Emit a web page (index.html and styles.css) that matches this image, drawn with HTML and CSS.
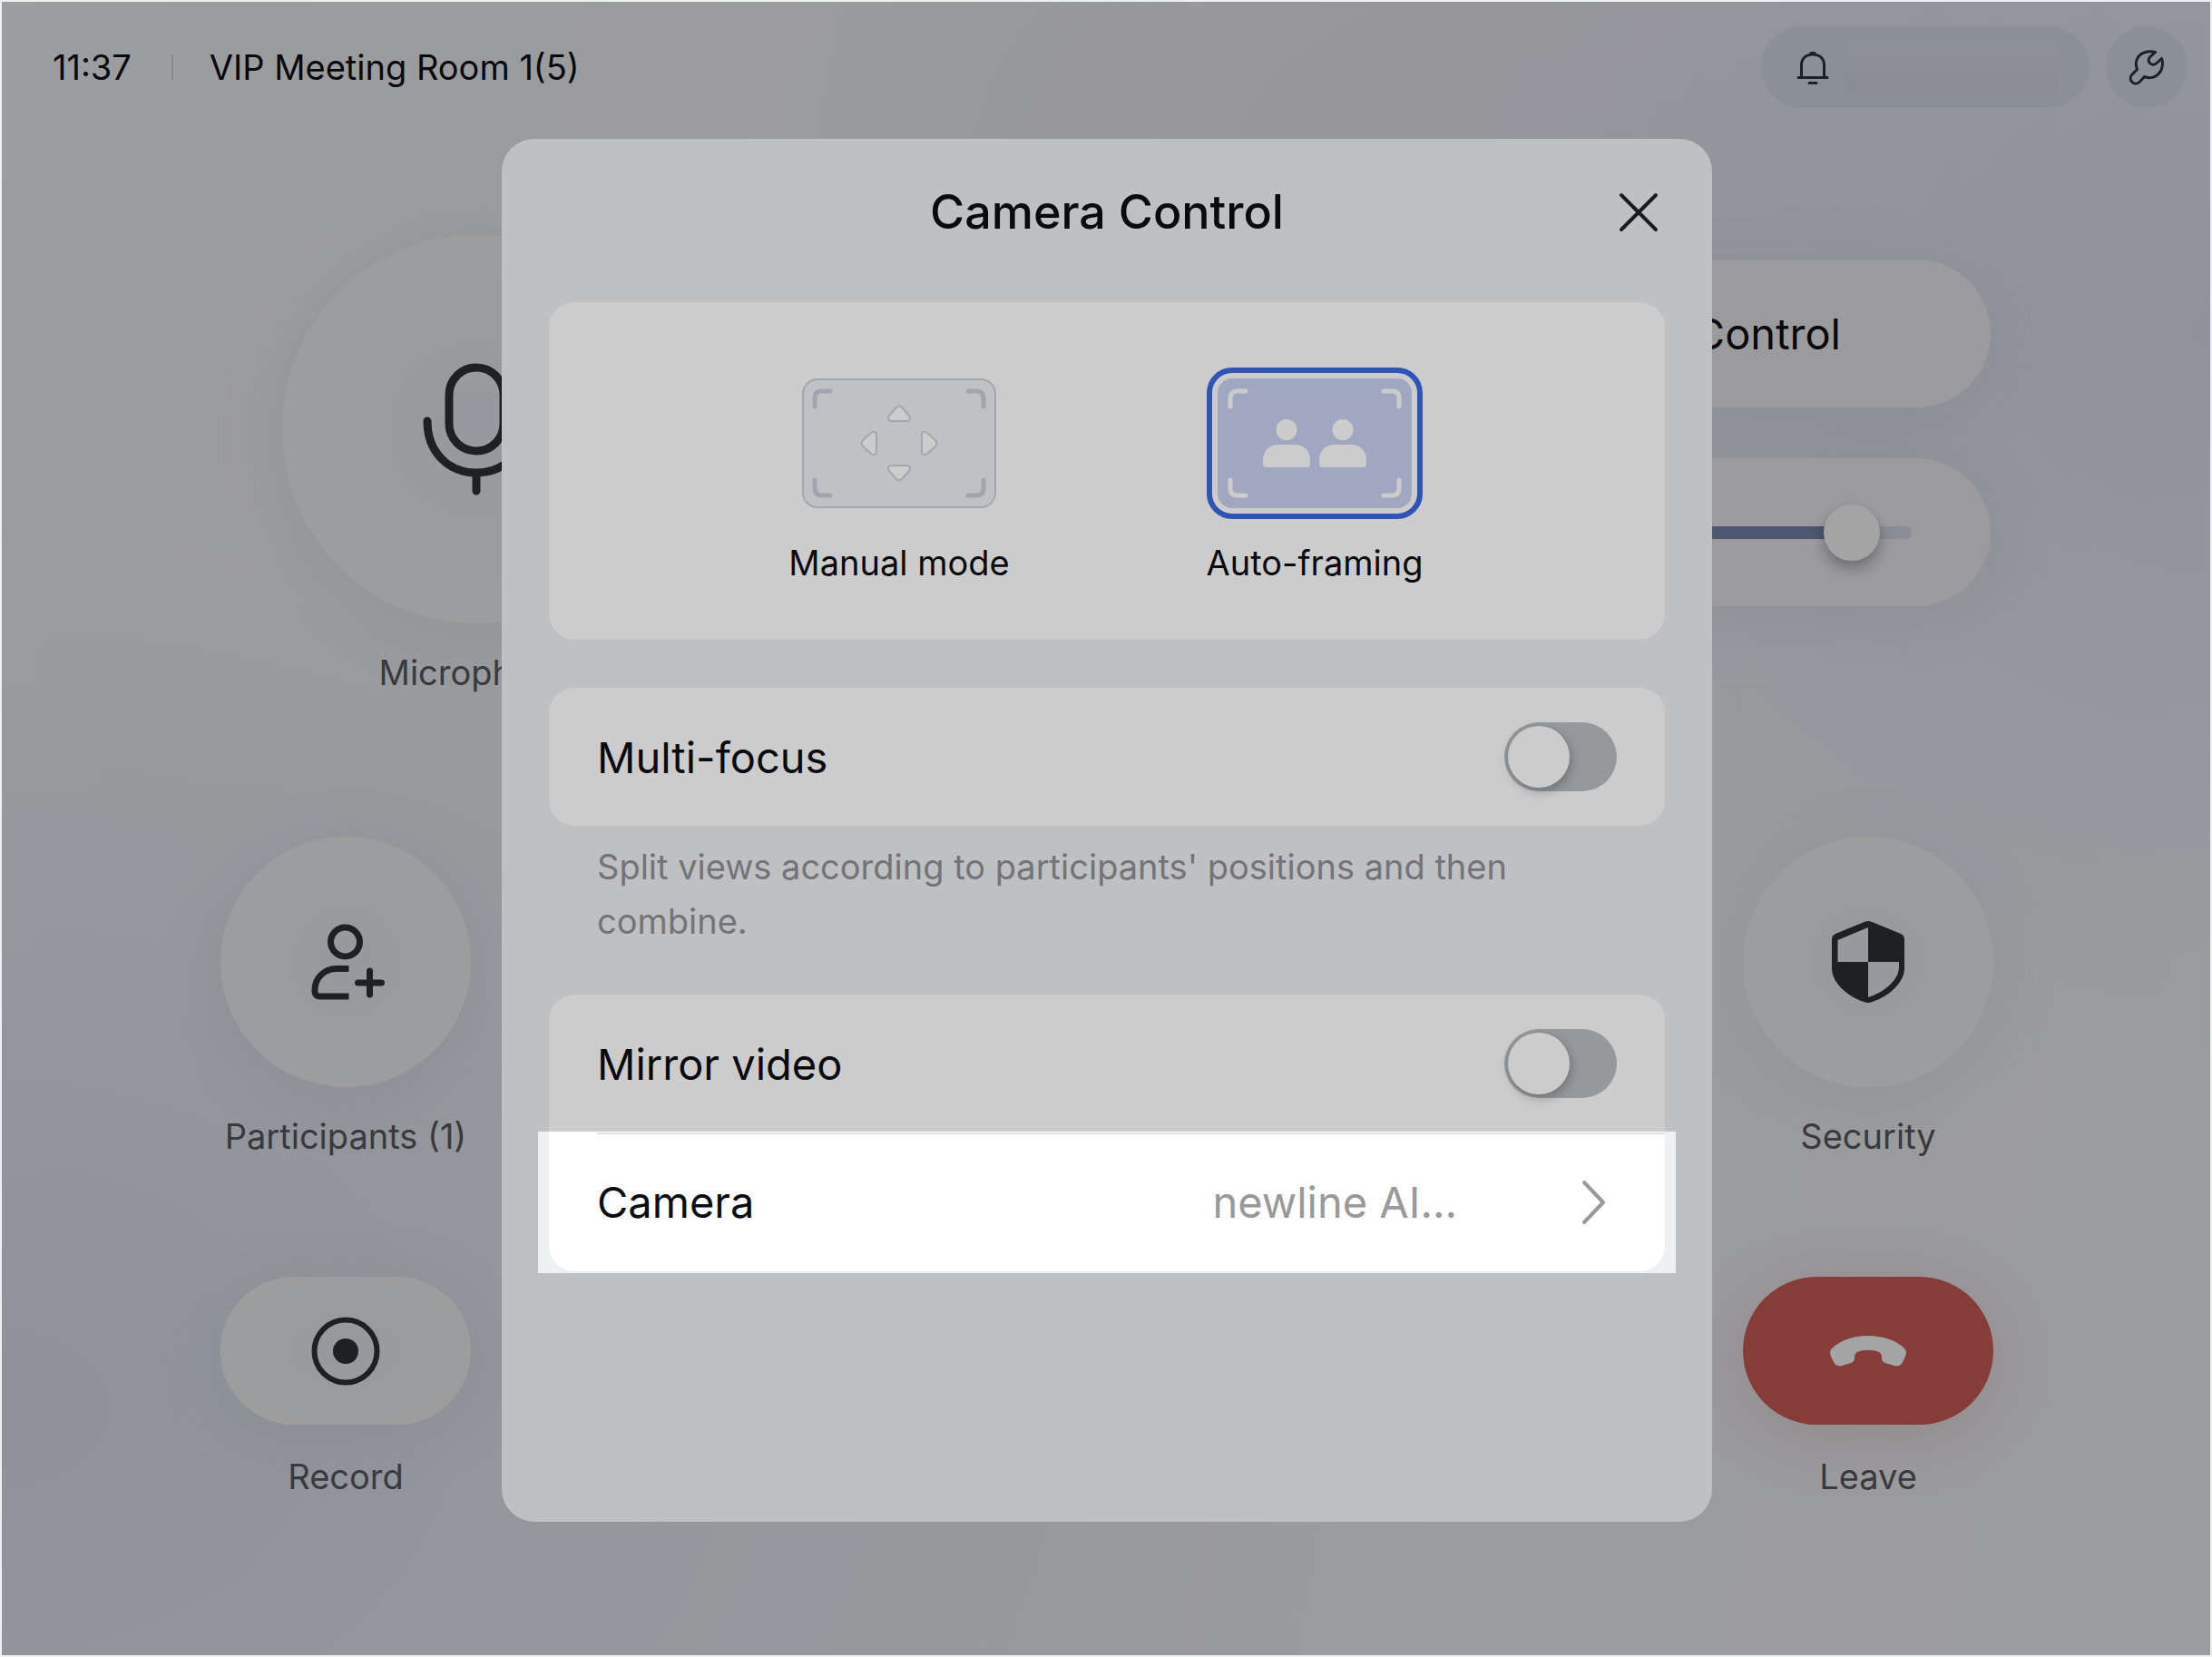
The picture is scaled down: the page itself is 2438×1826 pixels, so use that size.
FILE: index.html
```html
<!DOCTYPE html>
<html lang="en">
<head>
  <meta charset="UTF-8" />
  <meta name="viewport" content="width=device-width, initial-scale=1" />
  <title>Camera Control</title>
  <link rel="stylesheet" href="styles.css">
</head>
<body>
  <div class="room">
    <header class="topbar">
      <time class="clock">11:37</time>
      <span class="divider"></span>
      <span class="room-name">VIP Meeting Room 1(5)</span>
      <button class="top-btn notice" aria-label="Notifications">
        <svg class="top-icon" viewBox="0 0 40 40" fill="none" stroke="currentColor" stroke-width="3" stroke-linecap="round">
          <path d="M4 31.500H36M7.500 31V17.500C7.500 10.500 12.500 6 20 6S32.500 10.500 32.500 17.500V31" />
          <path d="M18 4.500H22M16 37.500H24" />
        </svg>
        <span class="notice-text"></span>
      </button>
      <button class="top-btn" aria-label="Settings">
        <svg class="top-icon" viewBox="0 0 40 40" fill="none" stroke="currentColor" stroke-width="3" stroke-linejoin="round">
          <path d="M29.500 3.500C19 .5 10 6 8.500 14C8 17.500 8.500 20 9.500 22.500L4 28C1.500 30.500 1.500 34 4 36.500S10 38.500 12.500 36L17.500 30.500C23 32.500 29 31.500 33 27.500C37.500 23 38.500 16 36.500 10.500L31 15.500C28.500 18 25.500 17.500 23.500 15.500C21.500 13.500 21.500 10.500 24 8.500Z" />
        </svg>
      </button>
    </header>

    <main class="panel">
      <div class="row row-top">
        <div class="action action-big">
          <button class="bubble" aria-labelledby="lbl-mic">
            <svg class="icon-mic" viewBox="0 0 118 146" fill="none" stroke="currentColor" stroke-width="9" stroke-linecap="round">
              <rect x="29" y="5" width="60" height="92" rx="30" />
              <path d="M5 64C5 98 28 121 59 121S113 98 113 64M59 121V141" />
            </svg>
          </button>
          <span class="label" id="lbl-mic">Microphone</span>
        </div>
        <div class="side">
          <button class="pill">Camera Control</button>
          <div class="pill">
            <input class="volume" type="range" min="0" max="100" value="93" aria-label="Volume" />
          </div>
        </div>
      </div>

      <div class="row">
        <div class="action">
          <button class="bubble" aria-labelledby="lbl-people">
            <svg class="icon-people" viewBox="-6 0 88 84" fill="none" stroke="currentColor" stroke-width="7">
              <circle cx="37.500" cy="20" r="16" />
              <path d="M41.500 49.500H28C14 49.500 4 60 4 73V75C4 78 6 80 9 80H41.500" />
              <path d="M51.500 65H77.500M64.500 52V78" stroke-linecap="round" />
            </svg>
          </button>
          <span class="label" id="lbl-people">Participants (1)</span>
        </div>
        <div class="action">
          <button class="bubble" aria-labelledby="lbl-security">
            <svg class="icon-shield" viewBox="0 0 82 90">
              <path fill="currentColor" fill-rule="evenodd" d="M38 .5Q41-.5 44 .5L77 14Q81 16 81 20V52C81 70 60 85 44 89.500Q41 90.500 38 89.500C22 85 1 70 1 52V20Q1 16 5 14ZM41 7L7.500 21V45H41V84C58 79 75 65 75 51V45H41Z" />
            </svg>
          </button>
          <span class="label" id="lbl-security">Security</span>
        </div>
      </div>

      <div class="row">
        <div class="action action-flat">
          <button class="bubble" aria-labelledby="lbl-record">
            <svg class="icon-record" viewBox="0 0 76 76">
              <circle cx="38" cy="38" r="34.500" fill="none" stroke="currentColor" stroke-width="6" />
              <circle cx="38" cy="38" r="14" fill="currentColor" />
            </svg>
          </button>
          <span class="label" id="lbl-record">Record</span>
        </div>
        <div class="action action-flat">
          <button class="bubble bubble-leave" aria-labelledby="lbl-leave">
            <svg class="icon-leave" viewBox="0 0 84 34">
              <path fill="currentColor" d="M42 0C58 0 73 5 82 14C85 17 84 21 82 25L80 29C78 33 75 34 71 33L61 30C58 29 57 27 57 24C57 21 56 19 54 18C48 15 36 15 30 18C28 19 27 21 27 24C27 27 26 29 23 30L13 33C9 34 6 33 4 29L2 25C0 21-1 17 2 14C11 5 26 0 42 0Z" />
            </svg>
          </button>
          <span class="label" id="lbl-leave">Leave</span>
        </div>
      </div>
    </main>
  </div>

  <div class="backdrop">
    <section class="dialog" role="dialog" aria-labelledby="dialog-title">
      <div class="dialog-head">
        <h1 class="dialog-title" id="dialog-title">Camera Control</h1>
        <button class="close" aria-label="Close">
          <svg class="icon-close" viewBox="0 0 44 44" fill="none" stroke="currentColor" stroke-width="4" stroke-linecap="round">
            <path d="M3 3L41 41M41 3L3 41" />
          </svg>
        </button>
      </div>

      <div class="card modes">
        <label class="mode">
          <input class="mode-input" type="radio" name="mode" value="manual" />
          <span class="mode-frame">
            <svg class="thumb" viewBox="0 0 214 143" fill="none">
              <rect x="1" y="1" width="212" height="141" rx="16" fill="#f0f2f6" stroke="#cdd1de" stroke-width="2" />
              <path stroke="#cbcedb" stroke-width="5" stroke-linecap="round" d="M14 31V22Q14 14 22 14H31M183 14H192Q200 14 200 22V31M200 112V121Q200 129 192 129H183M31 129H22Q14 129 14 121V112" />
              <g fill="#fff" stroke="#cdd1de" stroke-width="2" stroke-linejoin="round">
                <path d="M104 32Q107 29 110 32L118 41Q121 46 116 47H98Q93 46 96 41Z" />
                <path d="M104 111Q107 114 110 111L118 102Q121 97 116 96H98Q93 97 96 102Z" />
                <path d="M67 75Q64 71.500 67 68L76 60Q81 57 82 62V81Q81 86 76 83Z" />
                <path d="M147 75Q150 71.500 147 68L138 60Q133 57 132 62V81Q133 86 138 83Z" />
              </g>
            </svg>
          </span>
          <span class="mode-name">Manual mode</span>
        </label>
        <label class="mode">
          <input class="mode-input" type="radio" name="mode" value="auto" checked />
          <span class="mode-frame">
            <svg class="thumb" viewBox="0 0 214 143" fill="none">
              <rect width="214" height="143" rx="16" fill="#c9d3f2" />
              <path stroke="#fff" stroke-width="5" stroke-linecap="round" d="M14 31V22Q14 14 22 14H31M183 14H192Q200 14 200 22V31M200 112V121Q200 129 192 129H183M31 129H22Q14 129 14 121V112" />
              <g fill="#fff">
                <circle cx="76" cy="56.500" r="11.500" />
                <path d="M50 91C50 79 57 73 67 73H85C95 73 102 79 102 91V94Q102 98 98 98H54Q50 98 50 94Z" />
                <circle cx="138" cy="56.500" r="11.500" />
                <path d="M112 91C112 79 119 73 129 73H147C157 73 164 79 164 91V94Q164 98 160 98H116Q112 98 112 94Z" />
              </g>
            </svg>
          </span>
          <span class="mode-name">Auto-framing</span>
        </label>
      </div>

      <div class="card">
        <div class="setting">
          <label for="multi-focus">Multi-focus</label>
          <input class="switch" type="checkbox" id="multi-focus" />
        </div>
      </div>
      <p class="hint">Split views according to participants' positions and then combine.</p>

      <div class="card">
        <div class="setting">
          <label for="mirror">Mirror video</label>
          <input class="switch" type="checkbox" id="mirror" />
        </div>
        <button class="setting setting-link spotlight">
          <span>Camera</span>
          <span class="setting-value">newline AI...</span>
          <svg class="icon-chevron" viewBox="0 0 64 64" fill="none" stroke="currentColor" stroke-width="4" stroke-linecap="round" stroke-linejoin="round">
            <path d="M28 10L49 32L28 54" />
          </svg>
        </button>
      </div>
    </section>
  </div>
</body>
</html>
```
FILE: styles.css
```css
:root {
  --ink:      #0b0d12;
  --icon:     #303338;
  --muted:    #575b62;
  --surface:  #f4f5f6;
  --surface2: #e9edf4;
  --blue:     #3d68e6;
  --red:      #d15e59;
}

* { box-sizing: border-box; }

body {
  margin: 0;
  min-height: 100vh;
  overflow: hidden;
  font-family: Inter, "Liberation Sans", sans-serif;
  color: var(--ink);
}

/* light line round the whole screen */
body::after {
  content: "";
  position: fixed;
  inset: 0;
  border: 2px solid #eff1f1;
  pointer-events: none;
}

button {
  padding: 0;
  border: 0;
  background: none;
  color: inherit;
  font: inherit;
  cursor: pointer;
}

svg { display: block; }

.room {
  min-height: 100vh;
  background:
    radial-gradient(ellipse 35% 45% at 100% 20%, #dfe4f3, transparent),
    radial-gradient(ellipse 55% 55% at 0% 85%, #dde3f0, transparent),
    radial-gradient(ellipse 40% 30% at 72% 10%, #e9e8f1, transparent),
    linear-gradient(100deg, #f3f4f6, #eff0f4 55%, #f2f3f6);
}

.topbar {
  display: flex;
  align-items: center;
  padding: 29px 27px 0 58px;
  font-size: 38px;
}
.divider {
  width: 2px;
  height: 28px;
  margin: 0 40px 0 44px;
  background: #d3d4e0;
}
.top-btn {
  display: flex;
  align-items: center;
  justify-content: center;
  width: 90px;
  height: 90px;
  border-radius: 45px;
  background: #d9dee9;
  color: var(--icon);
}
.notice {
  gap: 16px;
  width: 362px;
  margin: 0 18px 0 auto;
}
.top-icon { width: 40px; height: 40px; }
.notice-text {
  width: 233px;
  height: 56px;
  background: linear-gradient(#e0e2ea, #d7dae5);
}

.panel {
  display: flex;
  flex-direction: column;
  gap: 131px;
  padding: 140px 241px 0 243px;
}
.row { display: flex; justify-content: space-between; }
.row-top { padding: 0 3px 26px 68px; }

.action {
  display: flex;
  flex-direction: column;
  align-items: center;
  flex-shrink: 0;
  gap: 30px;
  width: 276px;
}
.action-big { width: 428px; }
.action-flat { gap: 33px; }
.bubble {
  display: flex;
  align-items: center;
  justify-content: center;
  width: 100%;
  aspect-ratio: 1;
  border-radius: 50%;
  background: radial-gradient(closest-side, var(--surface2), var(--surface));
  box-shadow: 0 10px 80px rgba(100, 115, 150, .1);
  color: var(--icon);
}
.action-flat .bubble {
  height: 163px;
  aspect-ratio: auto;
  border-radius: 82px;
}
.action .bubble-leave {
  background: var(--red);
  box-shadow: 0 12px 80px rgba(150, 90, 90, .2);
  color: #fff;
}
.label {
  font-size: 38px;
  line-height: 48px;
  color: var(--muted);
  white-space: nowrap;
}

.icon-mic { width: 118px; height: 146px; }
.icon-people { width: 88px; height: 84px; }
.icon-shield { width: 82px; height: 90px; }
.icon-record { width: 76px; height: 76px; }
.icon-leave { width: 84px; height: 34px; }

.side {
  display: flex;
  flex-direction: column;
  gap: 56px;
  width: 740px;
  padding-top: 27px;
}
.pill {
  display: flex;
  align-items: center;
  justify-content: flex-end;
  height: 163px;
  padding: 0 165px 0 87px;
  border-radius: 82px;
  background: #f2f2f5;
  box-shadow: 0 10px 80px rgba(100, 110, 150, .1);
  font-size: 47px;
}
div.pill { padding-right: 87px; }

.volume {
  appearance: none;
  width: 100%;
  height: 14px;
  margin: 0;
  border-radius: 7px;
  background: linear-gradient(90deg, #7888b0 88%, #d7dbe8 88%);
}
.volume::-webkit-slider-thumb {
  appearance: none;
  width: 62px;
  height: 62px;
  border-radius: 50%;
  background: #fff;
  box-shadow: 0 8px 16px rgba(0, 0, 0, .3);
}

.backdrop {
  position: fixed;
  inset: 0;
  display: grid;
  place-items: center;
  padding: 4px 0 0 2px;
  background: rgba(0, 0, 0, .2);
}
.dialog {
  width: 94%;
  max-width: 1334px;
  padding: 0 52px 276px;
  border-radius: 36px;
  background: #eff0f2;
}
.dialog-head {
  display: grid;
  grid-template-columns: 1fr auto 1fr;
  align-items: center;
  padding: 51px 7px 69px;
}
.dialog-title {
  grid-column: 2;
  margin: 0;
  font-size: 52px;
  font-weight: 500;
  line-height: 60px;
}
.close { justify-self: end; color: #20242b; }
.icon-close { width: 44px; height: 44px; }

.card {
  border-radius: 28px;
  background: #fff;
}
.modes {
  display: flex;
  justify-content: center;
  gap: 220px;
  margin-bottom: 53px;
  padding: 72px 0 61px;
}
.mode {
  display: flex;
  flex-direction: column;
  align-items: center;
  gap: 24px;
  width: 238px;
  cursor: pointer;
}
.mode-input {
  position: absolute;
  opacity: 0;
}
.mode-frame {
  padding: 6px;
  border: 6px solid transparent;
  border-radius: 28px;
}
.mode-input:checked + .mode-frame { border-color: var(--blue); }
.thumb { width: 214px; height: 143px; }
.mode-name {
  font-size: 38px;
  line-height: 48px;
  white-space: nowrap;
}

.setting {
  display: flex;
  align-items: center;
  justify-content: space-between;
  height: 152px;
  padding: 0 53px;
  font-size: 47px;
}
.setting-link {
  position: relative;
  width: 100%;
  height: 153px;
  border-radius: 0 0 28px 28px;
  background: linear-gradient(#dfe1ea, #dfe1ea) 53px 0 / 100% 2px no-repeat;
}
.setting-value {
  margin: 0 112px 0 auto;
  color: #999;
}
.icon-chevron { width: 64px; height: 64px; color: #999; }

/* everything outside the current row is dimmed */
.spotlight::after {
  content: "";
  position: absolute;
  inset: -1px -12px -2px;
  box-shadow: 0 0 0 3000px rgba(0, 0, 0, .2);
  pointer-events: none;
}

.switch {
  appearance: none;
  display: flex;
  align-items: center;
  width: 124px;
  height: 76px;
  margin: 0;
  padding: 4px;
  border-radius: 38px;
  background: #bbc0c4;
  cursor: pointer;
}
.switch::before {
  content: "";
  width: 68px;
  height: 68px;
  border-radius: 50%;
  background: #fff;
  box-shadow: 2px 4px 12px rgba(0, 0, 0, .25);
}
.switch:checked { justify-content: flex-end; background: var(--blue); }

.hint {
  margin: 0;
  padding: 15px 53px 51px;
  font-size: 38px;
  line-height: 60px;
  color: #8f9299;
}
```
